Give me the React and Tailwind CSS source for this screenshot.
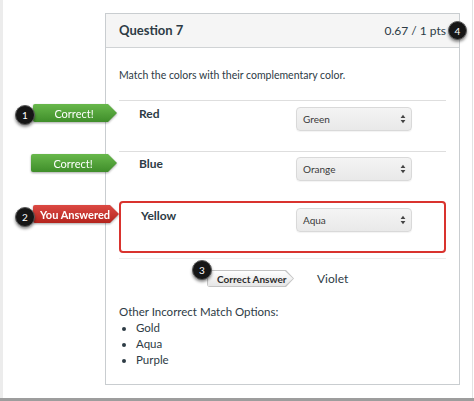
import React from "react";

function Circle({ n, className }) {
  return (
    <div
      className={
        "absolute z-10 flex items-center justify-center rounded-full bg-[#161616] border border-[#5a5a5a] text-white text-[10px] leading-none shadow-[0_2px_3px_rgba(0,0,0,0.45)] " +
        className
      }
    >
      {n}
    </div>
  );
}

function Tag({ children, red, className }) {
  return (
    <div className={"absolute drop-shadow-[0_1px_1px_rgba(0,0,0,0.35)] " + className}>
      <div
        className={
          "h-[18px] flex items-center justify-center pr-[8px] pl-[6px] text-white text-[11px] leading-none whitespace-nowrap [clip-path:polygon(0_0,calc(100%_-_9px)_0,100%_50%,calc(100%_-_9px)_100%,0_100%)] rounded-l-[2px] " +
          (red
            ? "bg-linear-to-b from-[#dc4943] to-[#b4231d] font-bold"
            : "bg-linear-to-b from-[#68b84b] to-[#3f8e2a]")
        }
      >
        {children}
      </div>
    </div>
  );
}

function Select({ label }) {
  return (
    <div className="w-[116px] h-[24px] rounded-[4px] border border-[#d9d9d9] bg-linear-to-b from-[#f4f4f4] to-[#e9e9e9] flex items-center justify-between pl-[6px] pr-[5px] text-[10px] text-[#3a3a3a] shadow-[0_1px_1px_rgba(0,0,0,0.05)]">
      <span>{label}</span>
      <svg width="6" height="10" viewBox="0 0 6 10">
        <path d="M3 0.8L5.4 4H0.6Z M3 9.2L0.6 6H5.4Z" fill="#444" />
      </svg>
    </div>
  );
}

export default function App() {
  return (
    <div className="w-[474px] h-[401px] bg-white font-['Lato','Noto_Sans',sans-serif] flex flex-col overflow-hidden">
      <div className="flex-1 flex">
        <div className="w-[3px] bg-[#ececec]" />
        <div className="flex-1 pl-[102px] pt-[13px]">
          <div className="relative w-[355px] h-[372px] border border-[#c9cdd0] bg-white">
            <div className="relative h-[34px] bg-[#f5f5f5] border-b border-[#d0d3d5] flex items-center justify-between pl-[13px] pr-[13px]">
              <span className="text-[13px] font-bold text-[#2d3b45]">Question 7</span>
              <span className="text-[12px] text-[#2d3b45]">0.67 / 1 pts</span>
              <Circle n="4" className="w-[19px] h-[19px] right-[-8px] top-[7px] text-[9px]" />
            </div>
            <div className="px-[13px]">
              <p className="pt-[20px] h-[52px] text-[10.5px] text-[#2d3b45]">
                Match the colors with their complementary color.
              </p>

              <div className="relative flex h-[51px] border-t border-[#dedede] pt-[6px] pl-[20px]">
                <Circle n="1" className="w-[20px] h-[20px] left-[-104px] top-[4px]" />
                <Tag className="left-[-86px] top-[3px] w-[84px]">
                  <span className="w-full text-center">Correct!</span>
                </Tag>
                <div className="w-[157px] text-[12px] font-bold text-[#2d3b45] leading-[14px]">Red</div>
                <Select label="Green" />
              </div>

              <div className="relative flex h-[50px] border-t border-[#dedede] pt-[5px] pl-[20px]">
                <Tag className="left-[-88px] top-[2px] w-[86px]">
                  <span className="w-full text-center">Correct!</span>
                </Tag>
                <div className="w-[157px] text-[12px] font-bold text-[#2d3b45] leading-[14px]">Blue</div>
                <Select label="Orange" />
              </div>

              <div className="relative flex h-[52px] border-2 border-[#d9332e] rounded-[4px] pt-[5px] pl-[20px]">
                <Circle n="2" className="w-[20px] h-[20px] left-[-106px] top-[4px]" />
                <Tag red className="left-[-88px] top-[2px] w-[86px]">
                  <span className="w-full text-center">You Answered</span>
                </Tag>
                <div className="w-[155px] text-[12px] font-bold text-[#2d3b45] leading-[14px] pt-[1px]">Yellow</div>
                <Select label="Aqua" />
              </div>

              <div className="mt-[5px] h-[40px] border-t border-[#ededed] flex items-center pl-[73px]">
                <div className="relative flex items-center">
                  <Circle n="3" className="w-[20px] h-[20px] left-0 top-[-10px]" />
                  <div className="ml-[15px] w-[87px] h-[17px] bg-[#c4c4c4] [clip-path:polygon(0_0,calc(100%_-_8px)_0,100%_50%,calc(100%_-_8px)_100%,0_100%)] rounded-l-[3px] p-[1px]">
                    <div className="w-full h-full bg-linear-to-b from-[#ffffff] to-[#e6e6e6] [clip-path:polygon(0_0,calc(100%_-_8px)_0,100%_50%,calc(100%_-_8px)_100%,0_100%)] flex items-center pl-[9px] text-[10px] font-bold text-[#2d2d2d] leading-none whitespace-nowrap">
                      Correct Answer
                    </div>
                  </div>
                  <span className="ml-[23px] text-[12px] text-[#2d3b45]">Violet</span>
                </div>
              </div>

              <div className="mt-[6px] text-[11.5px] text-[#2d3b45] leading-[16px]">
                <div>Other Incorrect Match Options:</div>
                <ul className="list-disc pl-[17px]">
                  <li>Gold</li>
                  <li>Aqua</li>
                  <li>Purple</li>
                </ul>
              </div>
            </div>
          </div>
        </div>
        <div className="w-[1px] bg-[#e2e2e2]" />
        <div className="w-[1px]" />
      </div>
      <div className="h-[3px] bg-[#9d9d9d]" />
    </div>
  );
}
